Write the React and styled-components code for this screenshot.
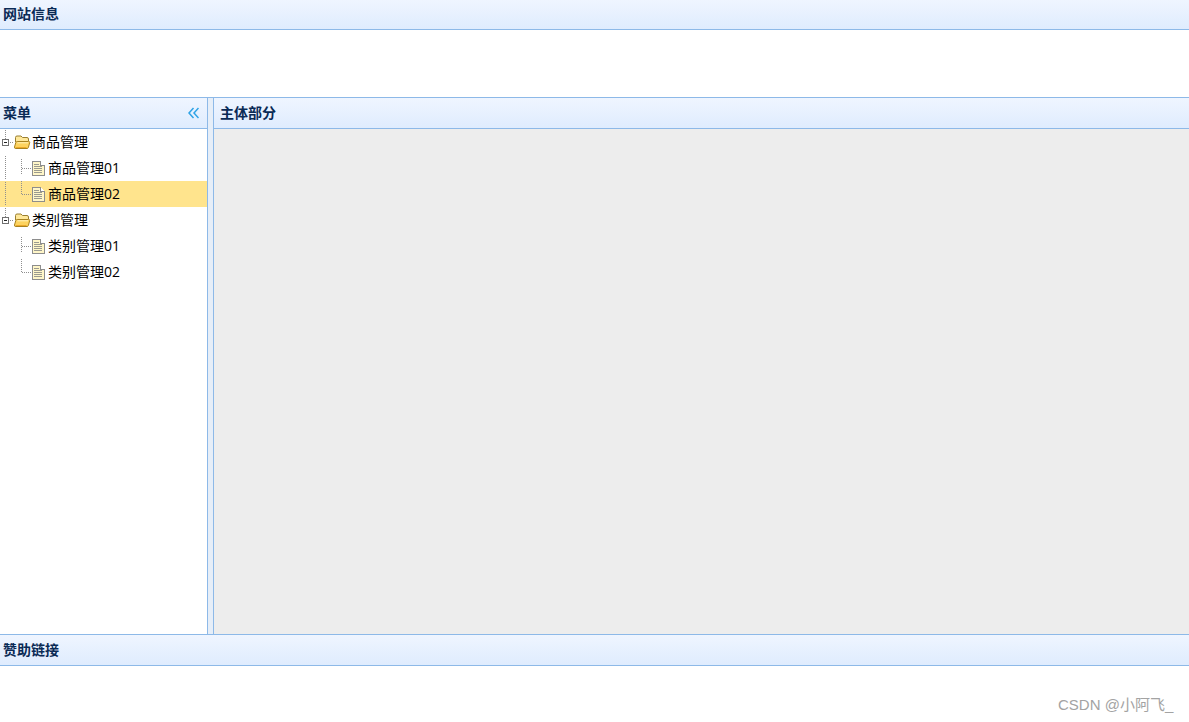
import React from "react";
import styled, { createGlobalStyle } from "styled-components";

const Global = createGlobalStyle`
  html, body { margin: 0; padding: 0; height: 100%; background: #fff; overflow: hidden; }
  #root { height: 100%; }
  * { box-sizing: border-box; }
`;

const FONT = `"Open Sans", "Noto Sans CJK SC", sans-serif`;

const Page = styled.div`
  position: relative;
  width: 100%;
  height: 722px;
  display: flex;
  flex-direction: column;
  font-family: ${FONT};
`;

const PanelHeader = styled.div`
  height: ${(p) => p.$h}px;
  flex: none;
  display: flex;
  align-items: center;
  justify-content: space-between;
  padding: 0 8px ${(p) => p.$pb ?? 0}px ${(p) => p.$pl ?? 3}px;
  background: linear-gradient(to bottom, #eff5ff 0%, #dfecfe 100%);
  border-bottom: 1px solid #8db9e8;
  ${(p) => (p.$top ? "border-top: 1px solid #8db9e8;" : "")}
`;

const Title = styled.span`
  font-size: 14px;
  font-weight: 700;
  line-height: 20px;
  color: #0a2a55;
`;

const TopBody = styled.div`
  height: 67px;
  flex: none;
  background: #fff;
`;

const Middle = styled.div`
  height: 537px;
  flex: none;
  display: flex;
  border-top: 1px solid #8db9e8;
`;

const West = styled.aside`
  width: 207px;
  flex: none;
  display: flex;
  flex-direction: column;
  background: #fff;
`;

const Splitter = styled.div`
  width: 7px;
  flex: none;
  background: #e6eef8;
  border-left: 1px solid #8db9e8;
  border-right: 1px solid #8db9e8;
`;

const Center = styled.main`
  flex: 1;
  display: flex;
  flex-direction: column;
  min-width: 0;
`;

const CenterBody = styled.div`
  flex: 1;
  background: #ededed;
`;

const Tree = styled.ul`
  list-style: none;
  margin: 0;
  padding: 0;
`;

const Row = styled.li`
  height: 26px;
  display: flex;
  align-items: center;
  background: ${(p) => (p.$selected ? "#ffe48d" : "transparent")};
  color: #000;
  font-size: 14px;
`;

const Glyph = styled.svg`
  display: block;
  flex: none;
`;

const Label = styled.span`
  margin-left: ${(p) => (p.$parent ? 0 : 2)}px;
  line-height: 26px;
  white-space: nowrap;
`;

const Bottom = styled.div`
  flex: 1;
  background: #fff;
`;

const Watermark = styled.div`
  position: absolute;
  left: 1058px;
  top: 695px;
  font-family: "Liberation Sans", "Noto Sans CJK SC", sans-serif;
  font-size: 15px;
  line-height: 20px;
  color: #a3a3a3;
  white-space: nowrap;
`;

const dot = { stroke: "#8f8f8f", strokeWidth: 1, strokeDasharray: "1 1", fill: "none", shapeRendering: "crispEdges" };

const Folder = () => (
  <g>
    <path d="M15.5 13 v-4.5 q0-1.5 1.5-1.5 h4 l1.5 1.5 h4.5 q1.5 0 1.5 1.5 v2" fill="#ffe89a" stroke="#9a7f30" />
    <path d="M16 19.5 h11 q1 0 1.4-1 l1.3-5 q.3-1-1-1 h-11.5 q-1 0-1.4 1 l-1.3 4.5 q-.3 1.5 1.5 1.5z" fill="#fdd35f" stroke="#a8821f" />
    <path d="M17.5 13.8 h10.5" stroke="#fff3bd" />
    <path d="M16 18.5 h10.5" stroke="#eca82a" />
  </g>
);

const FileIcon = () => (
  <g shapeRendering="crispEdges">
    <path d="M32.5 6.5 h8 l3.5 3.5 v10.5 h-11.5z" fill="#fff6c8" stroke="#8d8d8d" />
    <path d="M40.5 6.5 v3.5 h3.5" fill="#fff" stroke="#8d8d8d" />
    <path d="M34 9.5 h5 M34 11.5 h8 M34 13.5 h8 M34 15.5 h8 M34 17.5 h8" stroke="#9a9a90" />
  </g>
);

/* Guide lines, expander and icon of a parent node (32px wide, 26px high) */
const ParentGlyph = () => (
  <Glyph width="32" height="26" viewBox="0 0 32 26">
    <path d="M5.5 1 V10" style={dot} />
    <path d="M10 13.5 H14" style={dot} />
    <rect x="2.5" y="10.5" width="6" height="6" fill="#fff" stroke="#707070" shapeRendering="crispEdges" />
    <path d="M4 13.5 H7" stroke="#222" shapeRendering="crispEdges" />
    <Folder />
  </Glyph>
);

/* Guide lines and icon of a leaf node (46px wide, 26px high) */
const LeafGlyph = ({ outer, last }) => (
  <Glyph width="46" height="26" viewBox="0 0 46 26">
    {outer && <path d="M5.5 1 V24" style={dot} />}
    <path d={last ? "M21.5 0 V13" : "M21.5 4 V20"} style={dot} />
    <path d="M22 13.5 H31" style={dot} />
    <FileIcon />
  </Glyph>
);

const nodes = [
  { id: 1, label: "商品管理", parent: true },
  { id: 2, label: "商品管理01", outer: true },
  { id: 3, label: "商品管理02", outer: true, last: true, selected: true },
  { id: 4, label: "类别管理", parent: true },
  { id: 5, label: "类别管理01" },
  { id: 6, label: "类别管理02", last: true },
];

const Collapse = () => (
  <Glyph width="11" height="12" viewBox="0 0 11 12" fill="none" stroke="#2ea3e6" strokeWidth="1.5">
    <path d="M5.5 1 L1 6 L5.5 11" />
    <path d="M10.5 1 L6 6 L10.5 11" />
  </Glyph>
);

export default function App() {
  return (
    <Page>
      <Global />
      <PanelHeader $h={30} $pb={1}>
        <Title>网站信息</Title>
      </PanelHeader>
      <TopBody />
      <Middle>
        <West>
          <PanelHeader $h={31}>
            <Title>菜单</Title>
            <Collapse />
          </PanelHeader>
          <Tree>
            {nodes.map((n) => (
              <Row key={n.id} $selected={n.selected}>
                {n.parent ? <ParentGlyph /> : <LeafGlyph outer={n.outer} last={n.last} />}
                <Label $parent={n.parent}>{n.label}</Label>
              </Row>
            ))}
          </Tree>
        </West>
        <Splitter />
        <Center>
          <PanelHeader $h={31} $pl={6}>
            <Title>主体部分</Title>
          </PanelHeader>
          <CenterBody />
        </Center>
      </Middle>
      <PanelHeader $h={32} $top>
        <Title>赞助链接</Title>
      </PanelHeader>
      <Bottom />
      <Watermark>CSDN @小阿飞_</Watermark>
    </Page>
  );
}
